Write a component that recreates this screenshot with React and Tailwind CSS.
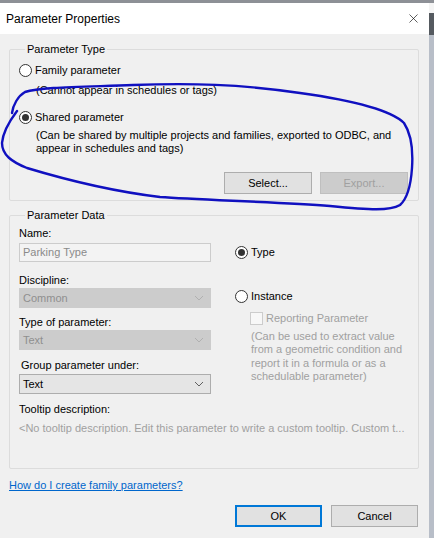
import { X } from 'lucide-react'

const font = { fontFamily: '"Liberation Sans", Arial, sans-serif' }

function Radio({ checked, label, dim }) {
  return (
    <div className="flex items-center h-4">
      <span className="w-[13px] h-[13px] rounded-full border border-[#333333] bg-white flex items-center justify-center shrink-0">
        {checked && <span className="w-[7px] h-[7px] rounded-full bg-[#333333]" />}
      </span>
      <span className={`ml-[3px] ${dim ? 'text-[#a0a0a0]' : 'text-black'}`}>{label}</span>
    </div>
  )
}

function Chevron({ color }) {
  return (
    <svg width="10" height="6" viewBox="0 0 10 6" className="shrink-0">
      <path d="M1 1 L5 5 L9 1" fill="none" stroke={color} strokeWidth="1" />
    </svg>
  )
}

function Combo({ value, disabled }) {
  return disabled ? (
    <div className="w-[192px] h-[20px] bg-[#cccccc] border border-[#cccccc] flex items-center justify-between pl-[3px] pr-[6px] text-[#8f8f8f]">
      <span>{value}</span>
      <Chevron color="#b0b0b0" />
    </div>
  ) : (
    <div className="w-[192px] h-[20px] bg-[#e5e5e5] border border-[#adadad] flex items-center justify-between pl-[3px] pr-[6px] text-black">
      <span>{value}</span>
      <Chevron color="#606060" />
    </div>
  )
}

export default function App() {
  return (
    <div className="w-[434px] h-[538px] overflow-hidden bg-[#7a7f86] flex flex-col text-[11px]" style={font}>
      <div className="h-[3px] bg-[#8d9096] shrink-0" />
      <div className="flex flex-1 min-h-0">
        <div className="w-[429px] flex flex-col relative">
          {/* Title bar */}
          <div className="h-[31px] bg-white flex items-center justify-between pl-[6px] pr-[8px] shrink-0">
            <span className="text-[12px] text-black">Parameter Properties</span>
            <X size={15} strokeWidth={1} className="text-black" />
          </div>

          {/* Body */}
          <div className="flex-1 bg-[#f0f0f0] pl-[9px] pr-[10px] pt-[7px]">
            {/* Parameter Type */}
            <fieldset className="border border-[#dcdcdc] rounded-[2px] pl-[9px] pr-[10px] pb-[6px] h-[160px]">
              <legend className="ml-[6px] px-[2px] leading-4 text-black">Parameter Type</legend>
              <div className="mt-[5px]">
                <Radio label="Family parameter" />
              </div>
              <div className="mt-[4px] ml-[17px] leading-4">(Cannot appear in schedules or tags)</div>
              <div className="mt-[11px]">
                <Radio checked label="Shared parameter" />
              </div>
              <div className="mt-[4px] ml-[17px] leading-[13px]">
                (Can be shared by multiple projects and families, exported to ODBC, and
                <br />
                appear in schedules and tags)
              </div>
              <div className="mt-[17px] flex justify-end gap-[8px]">
                <div className="w-[88px] h-[22px] bg-[#e1e1e1] border border-[#adadad] flex items-center justify-center text-black">
                  Select...
                </div>
                <div className="w-[88px] h-[22px] bg-[#cccccc] border border-[#bfbfbf] flex items-center justify-center text-[#a0a0a0]">
                  Export...
                </div>
              </div>
            </fieldset>

            {/* Parameter Data */}
            <fieldset className="mt-[6px] border border-[#dcdcdc] rounded-[2px] pl-[9px] pr-[10px] h-[262px]">
              <legend className="ml-[6px] px-[2px] leading-4 text-black">Parameter Data</legend>
              <div className="flex">
                <div className="w-[192px] flex flex-col">
                  <div className="mt-[2px] leading-4">Name:</div>
                  <div className="mt-[2px] w-[192px] h-[19px] border border-[#cccccc] bg-[#f3f3f3] flex items-center pl-[3px] text-[#8a8a8a]">
                    Parking Type
                  </div>
                  <div className="mt-[10px] leading-4">Discipline:</div>
                  <Combo value="Common" disabled />
                  <div className="mt-[6px] leading-4">Type of parameter:</div>
                  <Combo value="Text" disabled />
                  <div className="mt-[7px] ml-[2px] leading-4">Group parameter under:</div>
                  <div className="mt-[1px]">
                    <Combo value="Text" />
                  </div>
                </div>
                <div className="ml-[24px] flex flex-col">
                  <div className="mt-[21px]">
                    <Radio checked label="Type" />
                  </div>
                  <div className="mt-[28px]">
                    <Radio label="Instance" />
                  </div>
                  <div className="mt-[6px] ml-[15px] flex items-center h-4">
                    <span className="w-[13px] h-[13px] border border-[#cccccc] bg-[#f7f7f7]" />
                    <span className="ml-[3px] text-[#a0a0a0]">Reporting Parameter</span>
                  </div>
                  <div className="mt-[4px] ml-[16px] leading-[13.3px] text-[#a0a0a0]">
                    (Can be used to extract value
                    <br />
                    from a geometric condition and
                    <br />
                    report it in a formula or as a
                    <br />
                    schedulable parameter)
                  </div>
                </div>
              </div>
              <div className="mt-[7px] leading-4">Tooltip description:</div>
              <div className="mt-[3px] leading-4 text-[#a0a0a0] whitespace-nowrap">
                &lt;No tooltip description. Edit this parameter to write a custom tooltip. Custom t...
              </div>
            </fieldset>

            <div className="mt-[8px] leading-4">
              <span className="text-[#0066cc] underline">How do I create family parameters?</span>
            </div>

            <div className="mt-[12px] flex justify-end gap-[9px] pr-[1px]">
              <div className="w-[87px] h-[22px] bg-[#e1e1e1] border-2 border-[#0078d7] flex items-center justify-center text-black">
                OK
              </div>
              <div className="w-[87px] h-[22px] bg-[#e1e1e1] border border-[#adadad] flex items-center justify-center text-black">
                Cancel
              </div>
            </div>
          </div>

          {/* Hand-drawn annotation */}
          <svg className="absolute left-0 top-0 pointer-events-none" width="429" height="538" viewBox="0 0 429 538">
            <path
              d="M12 110 C13 102 18 93 25 89 C40 84 80 84 133 82 C190 80 240 81 300 90 C350 97 390 106 404 120 C412 132 413 150 412 165 C411 180 408 195 400 202 C390 208 370 207 330 203 C280 199 200 197 160 194 C110 188 70 178 27 165 C12 159 2 152 2 140 C3 128 11 116 17 108"
              fill="none"
              stroke="#1010c0"
              strokeWidth="2.4"
              strokeLinecap="round"
            />
          </svg>
        </div>
        <div className="flex-1 flex flex-col">
          <div className="h-[10px] bg-[#f4f4f4]" />
          <div className="h-[22px] bg-[#555a60]" />
          <div className="flex-1 bg-[#b8bec8]" />
        </div>
      </div>
    </div>
  )
}
